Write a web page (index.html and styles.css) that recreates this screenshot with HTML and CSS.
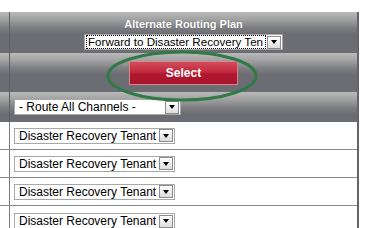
FILE: index.html
```html
<!DOCTYPE html>
<html>
<head>
<meta charset="utf-8">
<link rel="stylesheet" href="styles.css">
</head>
<body>
<div class="page">
  <div class="grid">
    <div class="row hdr hdr-a">
      <div class="lead"></div>
      <div class="cell center col">
        <div class="title">Alternate Routing Plan</div>
        <div class="sel sel-top"><span class="val focus">Forward to Disaster Recovery Ten</span><span class="arrow"><span class="tri"></span></span></div>
      </div>
    </div>
    <div class="row hdr hdr-b">
      <div class="lead"></div>
      <div class="cell center"><button class="btn">Select</button></div>
    </div>
    <div class="row hdr hdr-c">
      <div class="lead"></div>
      <div class="cell left"><div class="sel sel-route"><span class="val">- Route All Channels -</span><span class="arrow"><span class="tri"></span></span></div></div>
    </div>
    <div class="row body">
      <div class="lead"></div>
      <div class="cell left"><div class="sel sel-dr"><span class="val">Disaster Recovery Tenant</span><span class="arrow"><span class="tri"></span></span></div></div>
    </div>
    <div class="row body">
      <div class="lead"></div>
      <div class="cell left"><div class="sel sel-dr"><span class="val">Disaster Recovery Tenant</span><span class="arrow"><span class="tri"></span></span></div></div>
    </div>
    <div class="row body">
      <div class="lead"></div>
      <div class="cell left"><div class="sel sel-dr"><span class="val">Disaster Recovery Tenant</span><span class="arrow"><span class="tri"></span></span></div></div>
    </div>
    <div class="row body last">
      <div class="lead"></div>
      <div class="cell left"><div class="sel sel-dr"><span class="val">Disaster Recovery Tenant</span><span class="arrow"><span class="tri"></span></span></div></div>
    </div>
  </div>
  <svg class="ring" width="156" height="54" viewBox="0 0 156 54">
    <ellipse cx="78" cy="27" rx="74" ry="24" fill="none" stroke="#2f7a45" stroke-width="3"/>
  </svg>
</div>
</body>
</html>
```
FILE: styles.css
```css
* { box-sizing: border-box; }
html, body { margin: 0; padding: 0; background: #fff; }
body { font-family: "Liberation Sans", Arial, sans-serif; }
.page { position: relative; width: 370px; height: 228px; padding-top: 12px; overflow: hidden; }
.grid { width: 359px; border-right: 2px solid #646569; display: flex; flex-direction: column; }
.row { display: flex; }
.lead { width: 10px; border-right: 1px solid #6a6a6a; flex: none; }
.cell { flex: 1; display: flex; align-items: center; }
.cell.center { justify-content: center; }
.cell.left { padding-left: 4px; }
.cell.col { flex-direction: column; justify-content: flex-start; padding-top: 6px; }
.hdr { background: linear-gradient(to bottom, #b9b9b9 0px, #a3a3a4 7px, #7c7d81 16px, #6c6d72 22px, #6c6d72 100%); }
.hdr .lead { border-right-color: #5e5f63; }
.hdr-a { height: 41px; }
.hdr-b { height: 39px; }
.hdr-c { height: 30px; }
.body { height: 28px; border-bottom: 1px solid #8a8a8a; background: #fff; }
.body .lead { border-right-color: #7a7a7a; }
.body.last { border-bottom: none; height: 30px; }
.title { color: #fff; font-weight: bold; font-size: 11px; line-height: 13px; text-shadow: 0 0 1px rgba(0,0,0,0.35); }
.sel { display: flex; align-items: center; background: #fff; border: 1px solid #a8a8a8; height: 16px; font-size: 12px; color: #000; }
.sel .val { flex: 1; white-space: nowrap; overflow: hidden; line-height: 14px; padding-left: 4px; }
.sel .arrow { width: 14px; height: 13px; margin-right: 1px; flex: none; border: 1px solid #8c8c8c; background: linear-gradient(#ffffff, #dcdcdc); display: flex; align-items: center; justify-content: center; }
.tri { width: 0; height: 0; border-left: 3.5px solid transparent; border-right: 3.5px solid transparent; border-top: 4px solid #000; }
.sel-top { width: 199px; margin-top: 3px; height: 16px; font-size: 11.6px; }
.sel-top .val { padding-left: 1px; }
.sel-top .focus { border: 1px dotted #000; margin: 0 1px 0 1px; line-height: 12px; height: 14px; }
.sel-route { width: 167px; height: 16px; }
.sel-dr { width: 161px; height: 16px; }
.btn { width: 109px; height: 24px; border: 1px solid #d9868f; background: linear-gradient(to bottom, #d34c5a 0%, #c22a3d 45%, #b0172f 55%, #a8142b 100%); color: #fff; font-family: "Liberation Sans", Arial, sans-serif; font-weight: bold; font-size: 12px; padding: 0; margin-top: 1px; }
.ring { position: absolute; left: 104px; top: 49px; }
```
